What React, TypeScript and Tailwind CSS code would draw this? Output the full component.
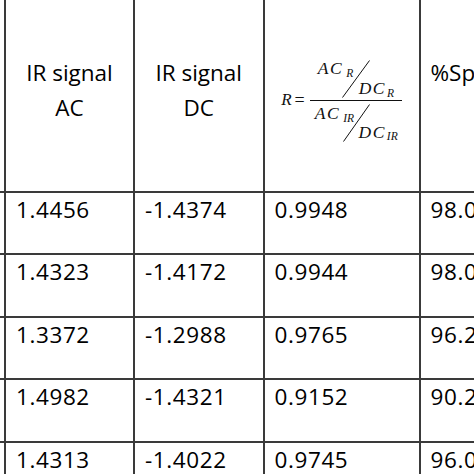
import React from 'react';

// rows of the measurement table, the last column runs off the edge
const rows = [
  ['1.4456', '-1.4374', '0.9948', '98.05'],
  ['1.4323', '-1.4172', '0.9944', '98.02'],
  ['1.3372', '-1.2988', '0.9765', '96.24'],
  ['1.4982', '-1.4321', '0.9152', '90.21'],
  ['1.4313', '-1.4022', '0.9745', '96.03'],
];

const cell = 'border-b-2 border-[#3a3a3a]';
const withLeft = 'border-l-2 border-b-2 border-[#3a3a3a]';

function Slash({ w, h }: { w: number; h: number }) {
  return (
    <svg width={w} height={h} viewBox={`0 0 ${w} ${h}`} className="shrink-0">
      <line x1={0.5} y1={h - 0.5} x2={w - 0.5} y2={0.5} stroke="#111" strokeWidth={1} />
    </svg>
  );
}

function Formula() {
  return (
    <div className="flex items-start font-['Liberation_Serif',serif] text-[#111] leading-none">
      <span className="mt-[31px] text-[17px] italic">R</span>
      <span className="mt-[31px] ml-[3px] text-[18px]">=</span>
      <div className="ml-[5px] flex w-[92px] flex-col">
        {/* numerator: AC_R / DC_R */}
        <div className="flex h-[38px] items-start">
          <span className="ml-[8px] text-[17.5px] italic tracking-[1.5px]">AC</span>
          <span className="ml-[3px] mt-[8px] text-[11.5px] italic">R</span>
          <span className="ml-[-11.5px]">
            <Slash w={28} h={38} />
          </span>
          <span className="ml-[-11px] mt-[20px] text-[17.5px] italic tracking-[1.5px]">DC</span>
          <span className="ml-[1px] mt-[28px] text-[11.5px] italic">R</span>
        </div>
        <div className="mt-[1.5px] h-px bg-[#111]" />
        {/* denominator: AC_IR / DC_IR */}
        <div className="mt-[3.8px] flex h-[38px] items-start">
          <span className="ml-[5px] mt-[1px] text-[17.5px] italic tracking-[1.5px]">AC</span>
          <span className="ml-[3px] mt-[8.7px] text-[11.5px] italic">IR</span>
          <span className="ml-[-11px]">
            <Slash w={27} h={38} />
          </span>
          <span className="ml-[-11.5px] mt-[19.3px] text-[17.5px] italic tracking-[1.5px]">DC</span>
          <span className="ml-[1px] mt-[27px] text-[11.5px] italic">IR</span>
        </div>
      </div>
    </div>
  );
}

export default function App() {
  return (
    <div className="h-[474px] w-[474px] overflow-hidden bg-white font-['Open_Sans',sans-serif] text-[22.5px] text-black">
      <div className="grid grid-cols-[4px_129px_129.5px_156px_1fr]">
        {/* header */}
        <div className={`h-[192.5px] ${cell}`} />
        <div className={`h-[192.5px] pt-[55px] text-center leading-[35px] ${withLeft}`}>
          IR signal
          <br />
          AC
        </div>
        <div className={`h-[192.5px] pt-[55px] text-center leading-[35px] ${withLeft}`}>
          IR signal
          <br />
          DC
        </div>
        <div className={`flex h-[192.5px] justify-center pt-[60px] ${withLeft}`}>
          <Formula />
        </div>
        <div className={`h-[192.5px] whitespace-nowrap pl-[10px] pt-[55px] leading-[35px] ${withLeft}`}>
          %SpO2
        </div>

        {rows.map((r, i) => (
          <React.Fragment key={i}>
            <div className={`h-[62.6px] ${cell}`} />
            {r.map((v, j) => (
              <div
                key={j}
                className={`h-[62.6px] whitespace-nowrap pl-[10px] pt-[1px] leading-[31px] tracking-[0.6px] ${withLeft}`}
              >
                {v}
              </div>
            ))}
          </React.Fragment>
        ))}
      </div>
    </div>
  );
}
